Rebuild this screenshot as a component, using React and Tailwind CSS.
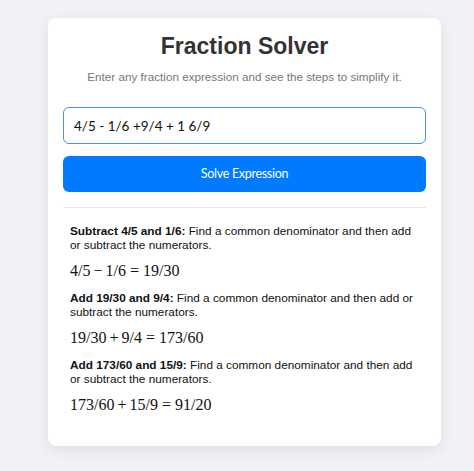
import { useState } from "react";

const steps = [
  {
    label: "Subtract 4/5 and 1/6:",
    math: [["4/5"], ["−", "op"], ["1/6"], ["=", "rel"], ["19/30"]],
  },
  {
    label: "Add 19/30 and 9/4:",
    math: [["19/30"], ["+", "op"], ["9/4"], ["=", "rel"], ["173/60"]],
  },
  {
    label: "Add 173/60 and 15/9:",
    math: [["173/60"], ["+", "op"], ["15/9"], ["=", "rel"], ["91/20"]],
  },
];

const MathLine = ({ parts }) => (
  <p className="text-[16px] leading-[20px] text-[#111] [font-family:'Liberation_Serif',serif]">
    {parts.map(([txt, kind], i) => (
      <span
        key={i}
        className={kind === "rel" ? "mx-[4px]" : kind === "op" ? "mx-[3px]" : ""}
      >
        {txt}
      </span>
    ))}
  </p>
);

export default function App() {
  const [expr, setExpr] = useState("4/5 - 1/6 +9/4 + 1 6/9");

  return (
    <div className="min-h-[471px] bg-[#f0f2f5] pt-[18px] pl-[48px] [font-family:'Liberation_Sans',Arial,sans-serif]">
      <div className="w-[393px] rounded-[8px] bg-white px-[15px] pt-[10px] pb-[21px] shadow-[0_4px_14px_rgba(0,0,0,0.08)]">
        <h1 className="text-center text-[23px] font-bold leading-[36px] text-[#333]">
          Fraction Solver
        </h1>
        <p className="mt-[4px] text-center text-[11.7px] leading-[18px] text-[#777]">
          Enter any fraction expression and see the steps to simplify it.
        </p>

        <input
          value={expr}
          onChange={(e) => setExpr(e.target.value)}
          className="mt-[21px] block h-[37px] w-full rounded-[6px] border-[1.5px] border-[#4a90e2] px-[10px] text-[13.5px] text-[#111] outline-none [font-family:Lato,sans-serif]"
        />

        <button className="mt-[12px] block h-[36px] w-full rounded-[6px] bg-[#007bff] text-[12.5px] tracking-[-0.3px] text-white [font-family:Lato,sans-serif]">
          Solve Expression
        </button>

        <div className="mt-[15px] h-px bg-[#e8e8e8]" />

        <div className="pl-[7px] pr-[9px] pt-[16px]">
          {steps.map((s, i) => (
            <div key={i} className="mb-[10px]">
              <p className="text-[11.8px] leading-[14px] text-[#111]">
                <strong>{s.label}</strong> Find a common denominator and then add or subtract the numerators.
              </p>
              <div className="mt-[9px]">
                <MathLine parts={s.math} />
              </div>
            </div>
          ))}
        </div>
      </div>
    </div>
  );
}
